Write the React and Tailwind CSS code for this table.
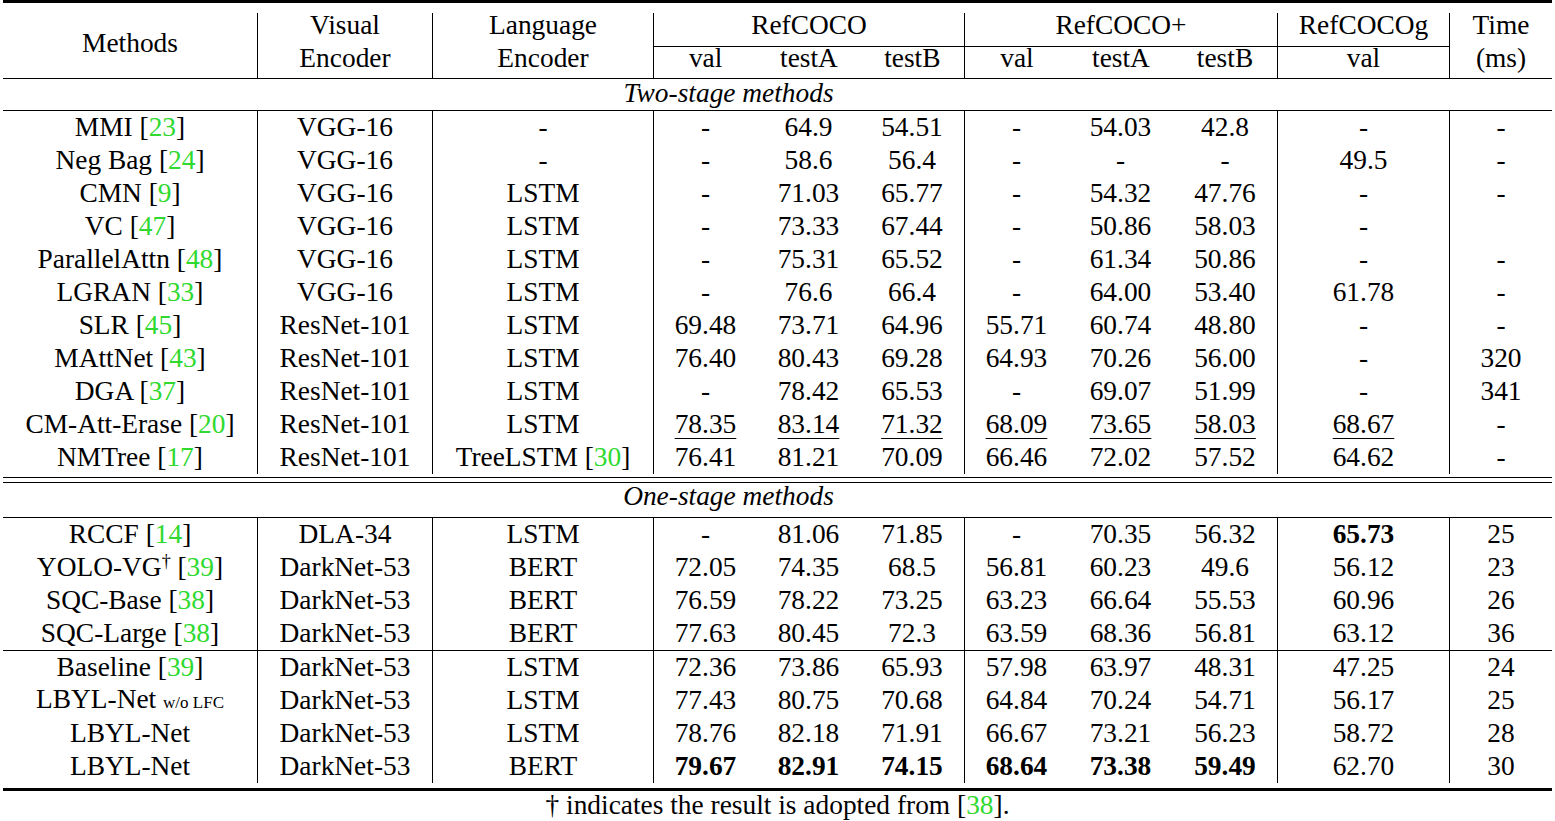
import React from 'react';
import clsx from 'clsx';

// column widths, index matches the cells of a body row
const widths = [
  'w-[254px]',
  'w-[175px]',
  'w-[221px]',
  'w-[104px]',
  'w-[103px]',
  'w-[104px]',
  'w-[104px]',
  'w-[105px]',
  'w-[104px]',
  'w-[172px]',
  'w-[103px]',
];
// vertical rules sit on the left of these columns
const ruled = [false, true, true, true, false, false, true, false, false, true, true];

const Cite = ({ n }) => (
  <>
    [<span className="text-[#2fd92f]">{n}</span>]
  </>
);

const Name = ({ label, n, dagger }) => (
  <span>
    {label}
    {dagger && <sup className="text-[18px]">†</sup>} <Cite n={n} />
  </span>
);

const twoStage = [
  [<Name label="MMI" n="23" />, 'VGG-16', '-', '-', '64.9', '54.51', '-', '54.03', '42.8', '-', '-'],
  [<Name label="Neg Bag" n="24" />, 'VGG-16', '-', '-', '58.6', '56.4', '-', '-', '-', '49.5', '-'],
  [<Name label="CMN" n="9" />, 'VGG-16', 'LSTM', '-', '71.03', '65.77', '-', '54.32', '47.76', '-', '-'],
  [<Name label="VC" n="47" />, 'VGG-16', 'LSTM', '-', '73.33', '67.44', '-', '50.86', '58.03', '-', ''],
  [<Name label="ParallelAttn" n="48" />, 'VGG-16', 'LSTM', '-', '75.31', '65.52', '-', '61.34', '50.86', '-', '-'],
  [<Name label="LGRAN" n="33" />, 'VGG-16', 'LSTM', '-', '76.6', '66.4', '-', '64.00', '53.40', '61.78', '-'],
  [<Name label="SLR" n="45" />, 'ResNet-101', 'LSTM', '69.48', '73.71', '64.96', '55.71', '60.74', '48.80', '-', '-'],
  [<Name label="MAttNet" n="43" />, 'ResNet-101', 'LSTM', '76.40', '80.43', '69.28', '64.93', '70.26', '56.00', '-', '320'],
  [<Name label="DGA" n="37" />, 'ResNet-101', 'LSTM', '-', '78.42', '65.53', '-', '69.07', '51.99', '-', '341'],
  [<Name label="CM-Att-Erase" n="20" />, 'ResNet-101', 'LSTM', '_78.35', '_83.14', '_71.32', '_68.09', '_73.65', '_58.03', '_68.67', '-'],
  [<Name label="NMTree" n="17" />, 'ResNet-101', <span>TreeLSTM <Cite n="30" /></span>, '76.41', '81.21', '70.09', '66.46', '72.02', '57.52', '64.62', '-'],
];

const oneStageA = [
  [<Name label="RCCF" n="14" />, 'DLA-34', 'LSTM', '-', '81.06', '71.85', '-', '70.35', '56.32', '*65.73', '25'],
  [<Name label="YOLO-VG" n="39" dagger />, 'DarkNet-53', 'BERT', '72.05', '74.35', '68.5', '56.81', '60.23', '49.6', '56.12', '23'],
  [<Name label="SQC-Base" n="38" />, 'DarkNet-53', 'BERT', '76.59', '78.22', '73.25', '63.23', '66.64', '55.53', '60.96', '26'],
  [<Name label="SQC-Large" n="38" />, 'DarkNet-53', 'BERT', '77.63', '80.45', '72.3', '63.59', '68.36', '56.81', '63.12', '36'],
];

const oneStageB = [
  [<Name label="Baseline" n="39" />, 'DarkNet-53', 'LSTM', '72.36', '73.86', '65.93', '57.98', '63.97', '48.31', '47.25', '24'],
  [<span>LBYL-Net <span className="text-[17px]">w/o LFC</span></span>, 'DarkNet-53', 'LSTM', '77.43', '80.75', '70.68', '64.84', '70.24', '54.71', '56.17', '25'],
  ['LBYL-Net', 'DarkNet-53', 'LSTM', '78.76', '82.18', '71.91', '66.67', '73.21', '56.23', '58.72', '28'],
  ['LBYL-Net', 'DarkNet-53', 'BERT', '*79.67', '*82.91', '*74.15', '*68.64', '*73.38', '*59.49', '62.70', '30'],
];

// '_' prefix = underlined (second best), '*' prefix = bold (best)
function Value({ v }) {
  if (typeof v !== 'string') return v;
  if (v.startsWith('_'))
    return <span className="underline decoration-1 underline-offset-[5px]">{v.slice(1)}</span>;
  if (v.startsWith('*')) return <span className="font-bold">{v.slice(1)}</span>;
  return v;
}

function Row({ cells }) {
  return (
    <div className="flex h-[33px] leading-[33px]">
      {cells.map((c, i) => (
        <div
          key={i}
          className={clsx(
            'flex items-center justify-center whitespace-nowrap',
            widths[i],
            ruled[i] && 'border-l border-black'
          )}
        >
          <Value v={c} />
        </div>
      ))}
    </div>
  );
}

function HeadCell({ w, top, rule, children }) {
  return (
    <div className={clsx(w, 'flex flex-col border-l border-black')}>
      <div className={clsx('h-[34px] leading-[24px] text-center', rule && 'border-b border-black')}>{top}</div>
      <div className="flex flex-1 leading-[22px]">{children}</div>
    </div>
  );
}

const Sub = ({ children }) => <div className="flex-1 text-center">{children}</div>;

const Line = () => <div className="h-px bg-black" />;

export default function App() {
  return (
    <div className="min-h-screen bg-white text-black font-['Liberation_Serif','Times_New_Roman',serif] text-[27.4px]">
      <div className="ml-[3px] w-[1549px]">
        <div className="h-[3px] bg-black" />
        <div className="h-[10px]" />

        {/* header */}
        <div className="flex h-[65px]">
          <div className="w-[254px] flex items-center justify-center pb-[6px] leading-[24px]">Methods</div>
          <HeadCell w="w-[175px]" top="Visual">
            <Sub>Encoder</Sub>
          </HeadCell>
          <HeadCell w="w-[221px]" top="Language">
            <Sub>Encoder</Sub>
          </HeadCell>
          <HeadCell w="w-[311px]" top="RefCOCO" rule>
            <Sub>val</Sub>
            <Sub>testA</Sub>
            <Sub>testB</Sub>
          </HeadCell>
          <HeadCell w="w-[313px]" top="RefCOCO+" rule>
            <Sub>val</Sub>
            <Sub>testA</Sub>
            <Sub>testB</Sub>
          </HeadCell>
          <HeadCell w="w-[172px]" top="RefCOCOg" rule>
            <Sub>val</Sub>
          </HeadCell>
          <HeadCell w="w-[103px]" top="Time">
            <Sub>(ms)</Sub>
          </HeadCell>
        </div>
        <Line />

        <div className="h-[31px] pt-[3px] leading-[22px] italic text-center pr-[98px]">Two-stage methods</div>
        <Line />
        {twoStage.map((r, i) => (
          <Row key={i} cells={r} />
        ))}

        <div className="h-[3px]" />
        <Line />
        <div className="h-[4px]" />
        <Line />

        <div className="h-[34px] pt-[3px] leading-[20px] italic text-center pr-[98px]">One-stage methods</div>
        <Line />
        {oneStageA.map((r, i) => (
          <Row key={i} cells={r} />
        ))}
        <Line />
        {oneStageB.map((r, i) => (
          <Row key={i} cells={r} />
        ))}

        <div className="h-[5px]" />
        <div className="h-[3px] bg-black" />
        <div className="pt-[2px] leading-[24px] text-center">
          † indicates the result is adopted from <Cite n="38" />.
        </div>
      </div>
    </div>
  );
}
